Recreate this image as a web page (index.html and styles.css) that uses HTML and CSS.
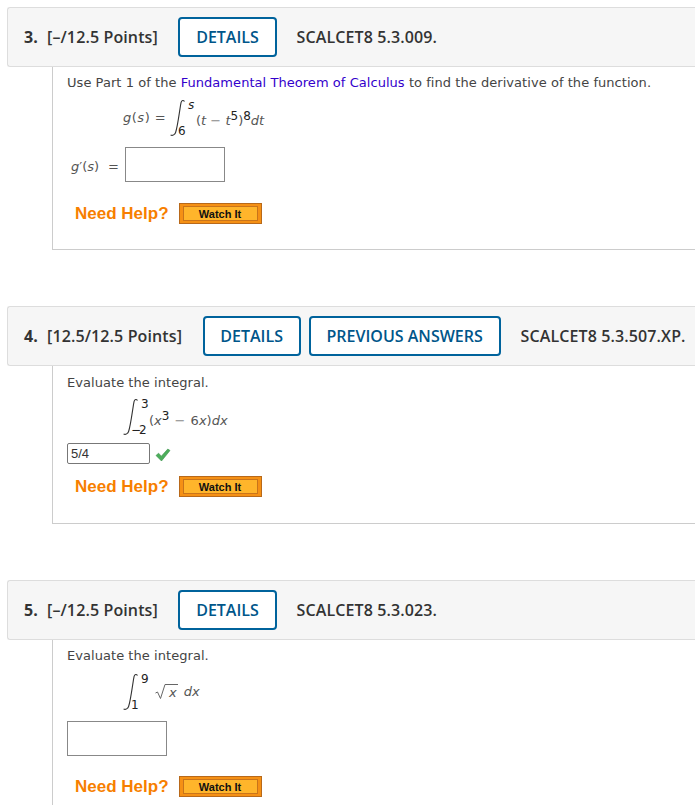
FILE: index.html
```html
<!DOCTYPE html>
<html lang="en">

<head>
    <meta charset="UTF-8">
    <meta name="viewport" content="width=device-width, initial-scale=1.0">
    <title>Assignment questions</title>
    <link rel="stylesheet" href="styles.css">
</head>

<body>
    <section class="question">
        <div class="question-header">
            <span class="question-number">3.</span>
            <span class="question-points">[–/12.5 Points]</span>
            <button class="btn-outline">DETAILS</button>
            <span class="question-code">SCALCET8 5.3.009.</span>
        </div>
        <div class="question-body body-q3">
            <p class="prompt">Use Part 1 of the <a href="#" class="term">Fundamental Theorem of Calculus</a> to find the derivative of the function.</p>
            <div class="math math-q3">
                <span class="lhs"><span class="var">g</span>(<span class="var">s</span>) =</span>
                <span class="integral">
                    <svg class="integral-sign" width="15" height="38" viewBox="0 0 15 38"><path d="M14.500 2.500c-1-1.500-2.800-1.500-3.400.8C10 8 8 26 5.600 33.500c-.6 2-3 3.500-5 2.500" fill="none" stroke="#333" stroke-width="1.100"/></svg>
                    <span class="limit-top var">s</span>
                    <span class="limit-bottom">6</span>
                </span>
                <span class="integrand">(<span class="var">t</span> <span class="minus">−</span> <span class="var">t</span><sup>5</sup>)<sup>8</sup><span class="var">dt</span></span>
            </div>
            <div class="answer-row">
                <span class="math answer-label"><span><span class="var">g</span>′(<span class="var">s</span>)</span><span>=</span></span>
                <input type="text" class="answer-box">
            </div>
            <div class="help-row">
                <span class="need-help">Need Help?</span>
                <button class="btn-watch"><span>Watch It</span></button>
            </div>
        </div>
    </section>

    <section class="question">
        <div class="question-header">
            <span class="question-number">4.</span>
            <span class="question-points">[12.5/12.5 Points]</span>
            <button class="btn-outline">DETAILS</button>
            <button class="btn-outline">PREVIOUS ANSWERS</button>
            <span class="question-code">SCALCET8 5.3.507.XP.</span>
        </div>
        <div class="question-body body-q4">
            <p class="prompt">Evaluate the integral.</p>
            <div class="math math-q4">
                <span class="integral">
                    <svg class="integral-sign" width="15" height="38" viewBox="0 0 15 38"><path d="M14.500 2.500c-1-1.500-2.800-1.500-3.400.8C10 8 8 26 5.600 33.500c-.6 2-3 3.500-5 2.500" fill="none" stroke="#333" stroke-width="1.100"/></svg>
                    <span class="limit-top">3</span>
                    <span class="limit-bottom limit-negative">−2</span>
                </span>
                <span class="integrand">(<span class="var">x</span><sup>3</sup> <span class="minus">−</span> 6<span class="var">x</span>)<span class="var">dx</span></span>
            </div>
            <div class="filled-row">
                <input type="text" class="answer-small" value="5/4">
                <svg class="check" width="16" height="14" viewBox="0 0 16 14"><path d="M1 7.500l2.600-2.300 2.700 3L12.800 1 15 2.500 6.500 13z" fill="#4cae5b" stroke="#3a9149" stroke-width=".6"/></svg>
            </div>
            <div class="help-row help-q4">
                <span class="need-help">Need Help?</span>
                <button class="btn-watch"><span>Watch It</span></button>
            </div>
        </div>
    </section>

    <section class="question">
        <div class="question-header">
            <span class="question-number">5.</span>
            <span class="question-points">[–/12.5 Points]</span>
            <button class="btn-outline">DETAILS</button>
            <span class="question-code">SCALCET8 5.3.023.</span>
        </div>
        <div class="question-body body-q5">
            <p class="prompt">Evaluate the integral.</p>
            <div class="math math-q5">
                <span class="integral">
                    <svg class="integral-sign" width="15" height="38" viewBox="0 0 15 38"><path d="M14.500 2.500c-1-1.500-2.800-1.500-3.400.8C10 8 8 26 5.600 33.500c-.6 2-3 3.500-5 2.500" fill="none" stroke="#333" stroke-width="1.100"/></svg>
                    <span class="limit-top">9</span>
                    <span class="limit-bottom">1</span>
                </span>
                <span class="integrand-root">
                    <svg class="root-sign" width="13" height="17" viewBox="0 0 13 17"><path d="M.5 10l2-1 3 6.500L10 1.500h3" fill="none" stroke="#666" stroke-width="1"/></svg><span class="radicand var">x</span>
                    <span class="var root-dx">dx</span>
                </span>
            </div>
            <input type="text" class="answer-box answer-block">
            <div class="help-row help-q5">
                <span class="need-help">Need Help?</span>
                <button class="btn-watch"><span>Watch It</span></button>
            </div>
        </div>
    </section>
</body>

</html>
```

FILE: styles.css
```css
html,
body {
    overflow: hidden;
}

body {
    margin: 0;
    padding: 7px 0 0 7px;
    height: 798px;
    background-color: #fff;
    font-family: "DejaVu Sans", Verdana, sans-serif;
    font-size: 13px;
    color: #444;
}

.question {
    margin-bottom: 56px;
}

.question:last-child {
    margin-bottom: 0;
}

/* Barra de cima de cada pergunta */

.question-header {
    display: flex;
    align-items: center;
    box-sizing: border-box;
    height: 60px;
    padding-left: 16px;
    background-color: #f6f6f6;
    border: 1px solid #ddd;
    border-right: none;
    border-radius: 3px 0 0 3px;
    font-family: "Open Sans", sans-serif;
    font-size: 16px;
    font-weight: 600;
    letter-spacing: 0.12px;
    white-space: nowrap;
    color: #333;
}

.question-number {
    font-weight: 700;
    width: 23px;
}

.question-points {
    margin-right: 20.500px;
}

.btn-outline {
    box-sizing: border-box;
    height: 40px;
    margin-right: 8px;
    padding: 0 15.750px;
    background-color: #fff;
    border: 2px solid #00639c;
    border-radius: 4px;
    font-family: "Open Sans", sans-serif;
    font-size: 16px;
    font-weight: 600;
    color: #00568a;
}

.question-code {
    margin-left: 12px;
}

/* Corpo da pergunta */

.question-body {
    box-sizing: border-box;
    margin-left: 45px;
    padding: 7px 0 0 14px;
    border-left: 1px solid #ccc;
    border-bottom: 1px solid #ccc;
}

.body-q3 {
    height: 183px;
}

.body-q4 {
    height: 158px;
    padding-top: 8px;
}

.body-q5 {
    border-bottom: none;
    height: 165px;
}

.prompt {
    margin: 0;
    line-height: 17px;
    letter-spacing: 0.05px;
}

.term {
    color: #3300cc;
    text-decoration: none;
}

.math {
    font-size: 13px;
    color: #555;
}

.math sup {
    font-size: 12px;
    line-height: 0;
    color: #222;
}

.var {
    font-style: italic;
}

.minus {
    color: #888;
}

.math-q3,
.math-q4,
.math-q5 {
    display: flex;
    align-items: center;
    margin-left: 56px;
}

.math-q3 {
    margin-top: 8px;
}

.math-q4 {
    margin-top: 7px;
}

.math-q5 {
    margin-top: 9px;
}

.lhs {
    width: 47px;
    margin-top: -2px;
    letter-spacing: 0.5px;
    white-space: nowrap;
}

/* Integral e limites por cima do sinal */

.integral {
    position: relative;
    display: block;
    flex: none;
    width: 26px;
    height: 38px;
}

.integral-sign {
    display: block;
}

.limit-top,
.limit-bottom {
    position: absolute;
    left: 18px;
    font-size: 12px;
    line-height: 14px;
    color: #222;
}

.limit-top {
    top: -1px;
}

.limit-bottom {
    bottom: -1px;
    left: 8px;
}

.limit-negative {
    letter-spacing: -2px;
}

.integrand {
    margin-top: 5px;
    white-space: nowrap;
}

.math-q4 .integrand {
    margin-top: 7px;
    word-spacing: 1px;
}

.integrand-root {
    display: flex;
    align-items: center;
    margin: -1px 0 0 6px;
}

.radicand {
    border-top: 1px solid #666;
    line-height: 15px;
    padding: 0 1px;
}

.root-dx {
    margin-left: 6px;
}

.answer-row {
    display: flex;
    align-items: center;
    margin: 10px 0 0 4px;
}

.answer-label {
    display: flex;
    justify-content: space-between;
    width: 48px;
    margin: 3px 6px 0 0;
}

.answer-box {
    display: block;
    box-sizing: border-box;
    width: 100px;
    height: 35px;
    margin: 0;
    background-color: #fff;
    border: 1px solid #888;
    border-radius: 0;
}

.answer-block {
    margin-top: 10px;
}

.filled-row {
    display: flex;
    align-items: center;
    gap: 5px;
    margin-top: 7px;
}

.answer-small {
    box-sizing: border-box;
    width: 83px;
    height: 21px;
    margin: 0;
    padding: 0 3px;
    border: 1px solid #777;
    border-radius: 2px;
    font-family: "Liberation Sans", Arial, sans-serif;
    font-size: 13px;
    color: #333;
}

.check {
    margin-top: 3px;
}

.help-row {
    display: flex;
    align-items: center;
    gap: 10px;
    margin: 21px 0 0 8px;
}

.help-q4 {
    margin-top: 12px;
}

.help-q5 {
    margin-top: 20px;
}

.need-help {
    font-family: "Liberation Sans", Arial, sans-serif;
    font-size: 17px;
    font-weight: 700;
    line-height: 21px;
    color: #f77f00;
}

.btn-watch {
    display: flex;
    box-sizing: border-box;
    width: 83px;
    height: 21px;
    padding: 2px 3px;
    background-color: #f59014;
    border: 1px solid #b8691a;
}

.btn-watch span {
    flex: 1;
    background-color: #ffb52b;
    border: 1px solid #c9741a;
    font-family: "Liberation Sans", Arial, sans-serif;
    font-size: 11px;
    font-weight: 700;
    line-height: 14px;
    color: #111;
}
```
